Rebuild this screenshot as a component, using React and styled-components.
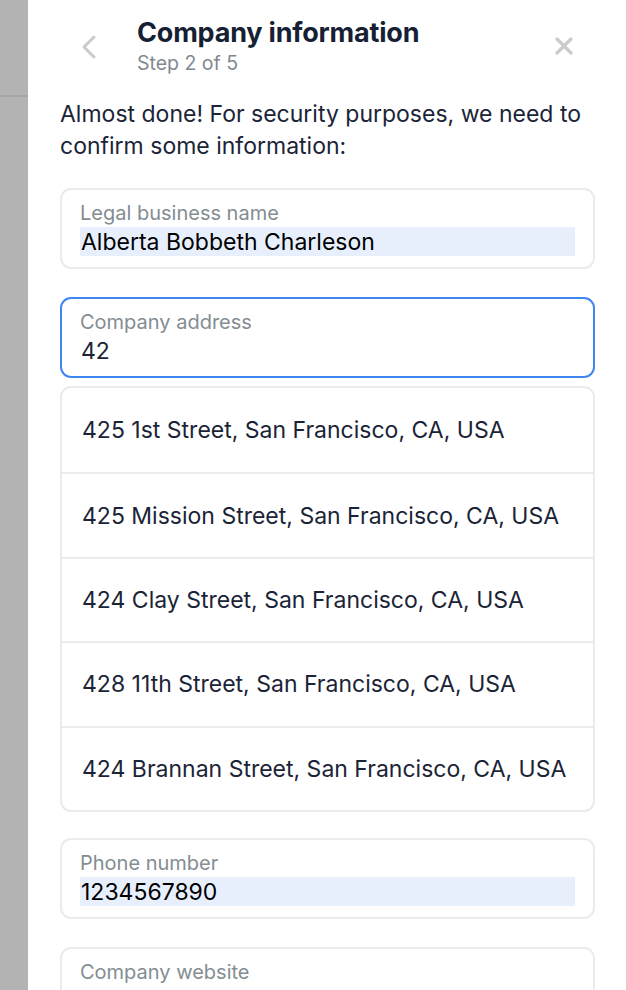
import React from "react";
import styled, { createGlobalStyle } from "styled-components";

const GlobalStyle = createGlobalStyle`
  html, body {
    margin: 0;
    padding: 0;
    background: #fff;
  }
  body {
    font-family: Inter, "Liberation Sans", Arial, sans-serif;
    -webkit-font-smoothing: antialiased;
  }
`;

const suggestions = [
  "425 1st Street, San Francisco, CA, USA",
  "425 Mission Street, San Francisco, CA, USA",
  "424 Clay Street, San Francisco, CA, USA",
  "428 11th Street, San Francisco, CA, USA",
  "424 Brannan Street, San Francisco, CA, USA",
];

export default function App() {
  return (
    <Page>
      <GlobalStyle />
      <Backdrop>
        <BackdropTop />
      </Backdrop>
      <Panel>
        <Header>
          <IconButton aria-label="Back">
            <svg width="18" height="26" viewBox="0 0 18 26" fill="none">
              <path
                d="M14 3 L4 13 L14 23"
                stroke="#c9cbcd"
                strokeWidth="3"
                strokeLinecap="round"
                strokeLinejoin="round"
              />
            </svg>
          </IconButton>
          <TitleBlock>
            <Title>Company information</Title>
            <Step>Step 2 of 5</Step>
          </TitleBlock>
          <CloseButton aria-label="Close">
            <svg width="20" height="20" viewBox="0 0 20 20" fill="none">
              <path
                d="M3 3 L17 17 M17 3 L3 17"
                stroke="#c9cbcd"
                strokeWidth="3.2"
                strokeLinecap="round"
              />
            </svg>
          </CloseButton>
        </Header>

        <Body>
          <Intro>
            Almost done! For security purposes, we need to confirm some
            information:
          </Intro>

          <Field>
            <Label>Legal business name</Label>
            <Value $filled>Alberta Bobbeth Charleson</Value>
          </Field>

          <AddressGroup>
            <Field $focused>
              <Label>Company address</Label>
              <Value $typed>42</Value>
            </Field>
            <Suggestions>
              {suggestions.map((s) => (
                <Suggestion key={s}>{s}</Suggestion>
              ))}
            </Suggestions>
          </AddressGroup>

          <Field>
            <Label>Phone number</Label>
            <Value $filled>1234567890</Value>
          </Field>

          <Field>
            <Label>Company website</Label>
            <Value />
          </Field>
        </Body>
      </Panel>
    </Page>
  );
}

const Page = styled.div`
  display: flex;
  min-height: 100vh;
  overflow: hidden;
`;

const Backdrop = styled.div`
  width: 28px;
  flex-shrink: 0;
  background: #b3b3b3;
`;

const BackdropTop = styled.div`
  height: 95px;
  border-bottom: 2px solid #a7a7a7;
`;

const Panel = styled.div`
  flex: 1;
  background: #fff;
  display: flex;
  flex-direction: column;
`;

const Header = styled.div`
  display: flex;
  align-items: flex-start;
  padding: 16px 0 0 52px;
`;

const IconButton = styled.div`
  width: 20px;
  height: 26px;
  margin-top: 18px;
  margin-right: 37px;
  display: flex;
  align-items: center;
`;

const CloseButton = styled.div`
  margin-left: auto;
  margin-right: 50px;
  margin-top: 18px;
  width: 24px;
  height: 24px;
  display: flex;
  align-items: center;
  justify-content: center;
`;

const TitleBlock = styled.div`
  display: flex;
  flex-direction: column;
`;

const Title = styled.div`
  font-size: 27px;
  line-height: 33px;
  font-weight: 700;
  color: #161f33;
  letter-spacing: -0.2px;
`;

const Step = styled.div`
  font-size: 19.5px;
  line-height: 28px;
  color: #7f8a90;
`;

const Body = styled.div`
  display: flex;
  flex-direction: column;
  gap: 28px;
  padding: 21px 31px 0 32px;
`;

const Intro = styled.p`
  margin: 0 0 -2px;
  font-size: 23px;
  line-height: 32px;
  color: #1b2437;
`;

const Field = styled.div`
  border: 2px solid ${(p) => (p.$focused ? "#3f87f0" : "#ebebeb")};
  border-radius: 11px;
  padding: 12px 18px 10px;
  display: flex;
  flex-direction: column;
  height: 81px;
  box-sizing: border-box;
`;

const Label = styled.div`
  font-size: 20px;
  line-height: 22px;
  color: #838d92;
`;

const Value = styled.div`
  margin-top: 3px;
  height: 29px;
  padding-left: 1px;
  font-size: 23px;
  line-height: 30px;
  color: ${(p) => (p.$typed ? "#1b2437" : "#000")};
  background: ${(p) => (p.$filled ? "#e8effc" : "transparent")};
`;

const AddressGroup = styled.div`
  display: flex;
  flex-direction: column;
  gap: 8px;
  margin-bottom: -2px;
`;

const Suggestions = styled.div`
  border: 2px solid #ebebeb;
  border-radius: 11px;
  display: flex;
  flex-direction: column;
  overflow: hidden;
`;

const Suggestion = styled.div`
  height: 84.4px;
  box-sizing: border-box;
  display: flex;
  align-items: center;
  padding: 0 20px;
  font-size: 23px;
  color: #1b2437;

  & + & {
    border-top: 2px solid #ebebeb;
  }
`;
